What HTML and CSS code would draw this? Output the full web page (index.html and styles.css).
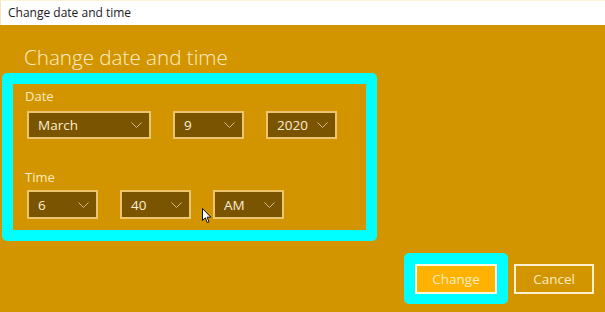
FILE: index.html
```html
<!DOCTYPE html>
<html>
<head>
<meta charset="utf-8">
<link rel="stylesheet" href="styles.css">
</head>
<body>
<div class="titlebar">Change date and time</div>
<div class="main">
  <h1 class="heading">Change date and time</h1>
  <div class="focus-box">
    <div class="group">
      <div class="label">Date</div>
      <div class="row">
        <div class="combo w-month"><span>March</span><svg class="chev" viewBox="0 0 11 6"><polyline points="0.5,0.5 5.5,5.5 10.5,0.5"/></svg></div>
        <div class="combo w-small"><span>9</span><svg class="chev" viewBox="0 0 11 6"><polyline points="0.5,0.5 5.5,5.5 10.5,0.5"/></svg></div>
        <div class="combo w-small"><span>2020</span><svg class="chev" viewBox="0 0 11 6"><polyline points="0.5,0.5 5.5,5.5 10.5,0.5"/></svg></div>
      </div>
    </div>
    <div class="group time">
      <div class="label">Time</div>
      <div class="row">
        <div class="combo w-small tall"><span>6</span><svg class="chev" viewBox="0 0 11 6"><polyline points="0.5,0.5 5.5,5.5 10.5,0.5"/></svg></div>
        <div class="combo w-small tall"><span>40</span><svg class="chev" viewBox="0 0 11 6"><polyline points="0.5,0.5 5.5,5.5 10.5,0.5"/></svg></div>
        <div class="combo w-small tall"><span>AM</span><svg class="chev" viewBox="0 0 11 6"><polyline points="0.5,0.5 5.5,5.5 10.5,0.5"/></svg></div>
      </div>
    </div>
  </div>
  <div class="actions">
    <div class="focus-btn"><button class="btn primary">Change</button></div>
    <button class="btn">Cancel</button>
  </div>
</div>
<svg class="cursor" viewBox="0 0 10 16"><path d="M0.5,0.5 L0.5,12.5 L3.3,9.8 L5.3,14.5 L7,13.8 L5.1,9.2 L8.8,9.2 Z"/></svg>
</body>
</html>
```
FILE: styles.css
```css
* { box-sizing: border-box; }
html, body { margin: 0; padding: 0; }
body {
  width: 605px;
  height: 312px;
  overflow: hidden;
  background: #d29500;
  font-family: "Open Sans", "Noto Sans", sans-serif;
  position: relative;
}
.titlebar {
  height: 25px;
  background: #ffffff;
  border-top: 1px solid #fbf3d6;
  border-left: 1px solid #f7e7b4;
  color: #1a1a1a;
  font-size: 12px;
  line-height: 23px;
  padding-left: 7px;
}
.main {
  display: flex;
  flex-direction: column;
}
.heading {
  margin: 0;
  padding: 18px 0 0 24px;
  font-size: 20.6px;
  font-weight: 300;
  line-height: 28px;
  color: #fdedc6;
  height: 48px;
}
.focus-box {
  margin-left: 2px;
  width: 375px;
  border: 11px solid #00ffff;
  border-radius: 5px;
  padding: 3px 0 11px 14px;
  display: flex;
  flex-direction: column;
}
.label {
  font-size: 13px;
  line-height: 18px;
  color: #fdebc0;
  margin-left: -2px;
  margin-bottom: 6px;
}
.group.time { margin-top: 29px; }
.group.time .label { margin-bottom: 4px; }
.row {
  display: flex;
  gap: 22px;
}
.combo {
  height: 28px;
  border: 2px solid #ecc56c;
  background: #7b5400;
  color: #fcefd6;
  font-size: 13.5px;
  display: flex;
  align-items: center;
  justify-content: space-between;
  padding: 0 7px 0 9px;
}
.combo.tall { height: 29px; }
.w-month { width: 124px; }
.w-small { width: 71px; }
.chev {
  width: 11px;
  height: 6px;
  fill: none;
  stroke: #d6bb86;
  stroke-width: 1;
}
.actions {
  margin-top: 12px;
  display: flex;
  justify-content: flex-end;
  align-items: flex-start;
  gap: 6px;
  padding-right: 11px;
}
.focus-btn {
  background: #00ffff;
  border-radius: 5px;
  padding: 11px 11px 10px 11px;
  display: flex;
}
.btn {
  width: 80px;
  height: 30px;
  margin: 0;
  border: 2px solid #fdf0cf;
  background: #d29500;
  color: #fdebc0;
  font-family: "Open Sans", "Noto Sans", sans-serif;
  font-size: 13.5px;
  padding: 0;
}
.actions > .btn { margin-top: 11px; }
.btn.primary {
  width: 82px;
  background: #ffb300;
  border-color: #fff6df;
}
.cursor {
  position: absolute;
  left: 202px;
  top: 208px;
  width: 10px;
  height: 16px;
  fill: #ffffff;
  stroke: #111111;
  stroke-width: 1;
}
```
